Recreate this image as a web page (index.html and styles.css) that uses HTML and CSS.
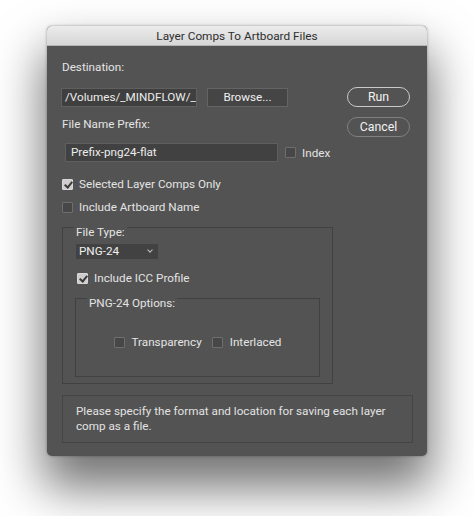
FILE: index.html
```html
<!DOCTYPE html>
<html lang="en">
<head>
    <meta charset="UTF-8">
    <meta name="viewport" content="width=device-width, initial-scale=1.0">
    <title>Layer Comps To Artboard Files</title>
    <link rel="stylesheet" href="styles.css">
</head>
<body>

<div class="dialog">
    <div class="titlebar">Layer Comps To Artboard Files</div>

    <div class="content">
        <div class="top">
            <div class="fields">
                <div class="label">Destination:</div>
                <div class="row path-row">
                    <div class="textbox path">/Volumes/_MINDFLOW/_M</div>
                    <div class="browse">Browse...</div>
                </div>

                <div class="label prefix-label">File Name Prefix:</div>
                <div class="row prefix-row">
                    <div class="textbox prefix">Prefix-png24-flat</div>
                    <span class="box"></span>
                    <span class="check-text">Index</span>
                </div>

                <div class="check-row first-check">
                    <span class="box checked"></span>
                    <span class="check-text">Selected Layer Comps Only</span>
                </div>
                <div class="check-row second-check">
                    <span class="box"></span>
                    <span class="check-text">Include Artboard Name</span>
                </div>
            </div>

            <div class="buttons">
                <div class="pill run">Run</div>
                <div class="pill cancel">Cancel</div>
            </div>
        </div>

        <fieldset class="group file-type">
            <legend>File Type:</legend>
            <div class="select">PNG-24 <span class="caret"></span></div>
            <div class="check-row icc">
                <span class="box checked"></span>
                <span class="check-text">Include ICC Profile</span>
            </div>

            <fieldset class="group options">
                <legend>PNG-24 Options:</legend>
                <div class="option-row">
                    <span class="box"></span>
                    <span class="check-text">Transparency</span>
                    <span class="box spaced"></span>
                    <span class="check-text">Interlaced</span>
                </div>
            </fieldset>
        </fieldset>

        <div class="message">
            Please specify the format and location for saving each layer comp as a file.
        </div>
    </div>
</div>

</body>
</html>
```

FILE: styles.css
```css
body {
    margin: 0;
    padding-bottom: 60px;
    background-color: #ffffff;
    font-family: 'Roboto', 'Liberation Sans', sans-serif;
    font-size: 11.7px;
}

.dialog {
    width: 380px;
    margin: 26px 0 0 47px;
    border-radius: 5px;
    background-color: #535353;
    box-shadow: 0 28px 48px 4px rgba(0, 0, 0, 0.55), 0 0 3px rgba(0, 0, 0, 0.35);
    color: #e4e4e4;
}

.titlebar {
    height: 20px;
    line-height: 20px;
    text-align: center;
    font-size: 11.8px;
    color: #2e2e2e;
    background: linear-gradient(#ececec, #d6d6d6);
    border-radius: 5px 5px 0 0;
    border-bottom: 1px solid #b4b4b4;
    box-sizing: border-box;
}

.content {
    padding: 14px 13px 13px 15px;
}

.top {
    display: flex;
}

.fields {
    flex: 1;
}

.label {
    line-height: 14px;
}

.row {
    display: flex;
    align-items: center;
}

.path-row {
    margin-top: 14px;
    height: 19px;
}

.textbox {
    height: 19px;
    line-height: 17px;
    box-sizing: border-box;
    padding: 0 5px;
    background-color: #3f3f3f;
    border: 1px solid #5f5f5f;
    color: #ececec;
    white-space: nowrap;
    overflow: hidden;
}

.path {
    width: 136px;
    padding: 0 3px;
    margin-left: -1px;
}

.browse {
    margin-left: 10px;
    width: 81px;
    height: 19px;
    line-height: 17px;
    box-sizing: border-box;
    text-align: center;
    background-color: #454545;
    border: 1px solid #646464;
    color: #f0f0f0;
}

.prefix-label {
    margin-top: 10px;
}

.prefix-row {
    margin-top: 12px;
}

.prefix {
    width: 213px;
    margin-left: 3px;
    background-color: #414141;
}

.prefix-row .box {
    margin-left: 7px;
}

.box {
    display: inline-block;
    width: 11px;
    height: 11px;
    box-sizing: border-box;
    border: 1px solid #6e6e6e;
    background-color: #474747;
    border-radius: 1px;
    position: relative;
    flex: none;
}

.box.checked {
    background-color: #cdcdcd;
    border-color: #d8d8d8;
}

.box.checked::after {
    content: '';
    position: absolute;
    left: 3px;
    top: 0px;
    width: 3px;
    height: 6px;
    border: solid #3a3a3a;
    border-width: 0 2px 2px 0;
    transform: rotate(40deg);
}

.check-text {
    margin-left: 6px;
    line-height: 14px;
}

.check-row {
    display: flex;
    align-items: center;
    height: 14px;
}

.first-check {
    margin-top: 15px;
}

.second-check {
    margin-top: 9px;
}

.buttons {
    margin-top: 27px;
    width: 63px;
    margin-left: 10px;
    margin-right: 4px;
}

.pill {
    height: 20px;
    line-height: 18px;
    box-sizing: border-box;
    border-radius: 10px;
    text-align: center;
    font-size: 12.3px;
    color: #f2f2f2;
}

.run {
    border: 1px solid #c9c9c9;
}

.cancel {
    margin-top: 10px;
    border: 1px solid #808080;
}

.group {
    margin: 0;
    border: 1px solid #414141;
    min-width: 0;
}

.group legend {
    padding: 10px 2px 0;
    margin-left: -2px;
    line-height: 14px;
}

.file-type {
    margin-top: 1px;
    width: 271px;
    box-sizing: border-box;
    padding: 0 0 6px 13px;
}

.select {
    margin-top: 5px;
    width: 82px;
    height: 15px;
    line-height: 15px;
    box-sizing: border-box;
    padding-left: 3px;
    background-color: #424242;
    color: #f0f0f0;
    position: relative;
}

.caret {
    position: absolute;
    right: 6px;
    top: 4px;
    width: 3px;
    height: 3px;
    border: solid #bdbdbd;
    border-width: 0 1px 1px 0;
    transform: rotate(45deg);
}

.icc {
    margin-top: 12px;
    margin-left: 1px;
}

.options {
    margin-top: 1px;
    margin-left: -1px;
    width: 245px;
    box-sizing: border-box;
    padding: 0 0 27px 13px;
}

.option-row {
    margin-top: 25px;
    margin-left: -13px;
    display: flex;
    justify-content: center;
    align-items: center;
    height: 14px;
}

.option-row .check-text {
    margin-left: 7px;
}

.box.spaced {
    margin-left: 10px;
}

.message {
    margin-top: 11px;
    width: 351px;
    box-sizing: border-box;
    padding: 8px 13px;
    line-height: 15px;
    border: 1px solid #444444;
    color: #e2e2e2;
}
```
